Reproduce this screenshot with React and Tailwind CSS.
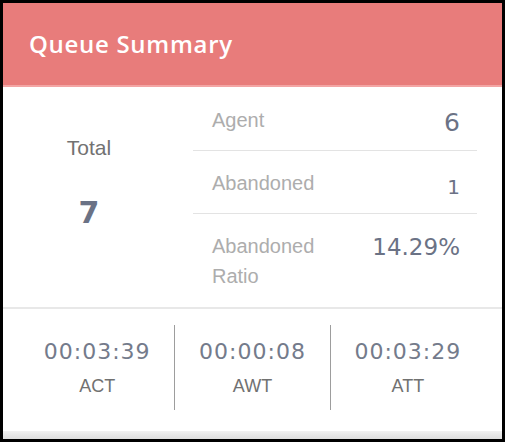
export default function App() {
  const times = [
    { value: '00:03:39', label: 'ACT' },
    { value: '00:00:08', label: 'AWT' },
    { value: '00:03:29', label: 'ATT' },
  ]
  const num = { fontFamily: '"DejaVu Sans", sans-serif' }

  return (
    <div className="w-[508px] h-[446px] bg-white">
      <div className="w-[505px] h-[442px] border-[3px] border-black flex flex-col bg-white" style={{ fontFamily: '"Liberation Sans", Arial, sans-serif' }}>
        <div className="h-[84px] shrink-0 bg-[#e87c7b] border-b-2 border-[#f3a5a4] flex items-center pl-[26px]">
          <h1 className="text-white text-[24px] font-semibold tracking-[0.7px] leading-none" style={{ fontFamily: '"Open Sans", sans-serif' }}>Queue Summary</h1>
        </div>

        <div className="flex h-[222px] shrink-0 border-b-2 border-[#e8e8e8]">
          <div className="w-[172px] flex flex-col items-center pt-[50px]">
            <div className="text-[21px] leading-[21px] text-[#727272]">Total</div>
            <div className="text-[30px] leading-[30px] font-bold text-[#6b7285] mt-[40px]" style={num}>7</div>
          </div>
          <div className="flex-1 pl-[18px] pr-[25px]">
            <div className="flex justify-between items-start h-[64px] border-b border-[#e3e3e3] pt-[23px] pl-[19px] pr-[17px]">
              <span className="text-[20px] leading-[20px] text-[#adadad]">Agent</span>
              <span className="text-[25px] leading-[25px] text-[#6b7285]" style={num}>6</span>
            </div>
            <div className="flex justify-between items-start h-[63px] border-b border-[#e3e3e3] pt-[22px] pl-[19px] pr-[17px]">
              <span className="text-[20px] leading-[20px] text-[#adadad]">Abandoned</span>
              <span className="text-[20px] leading-[20px] text-[#6b7285] mt-[4px]" style={num}>1</span>
            </div>
            <div className="flex justify-between items-start pt-[17px] pl-[19px] pr-[17px]">
              <span className="text-[20px] leading-[30px] text-[#adadad]">Abandoned<br />Ratio</span>
              <span className="text-[23px] leading-[23px] text-[#6b7285] mt-[5px]" style={num}>14.29%</span>
            </div>
          </div>
        </div>

        <div className="flex px-[17px] pt-[16px] h-[122px] shrink-0">
          {times.map((t, i) => (
            <div key={t.label} className={'flex-1 h-[85px] flex flex-col items-center pt-[16px] ' + (i > 0 ? 'border-l border-[#9d9d9d]' : '')}>
              <div className="text-[22px] leading-[21px] tracking-[1px] text-[#747b8b]" style={num}>{t.value}</div>
              <div className="text-[18px] leading-[18px] text-[#717171] mt-[15px]">{t.label}</div>
            </div>
          ))}
        </div>
        <div className="flex-1 bg-gradient-to-b from-[#f1f1f1] to-[#dedede]" />
      </div>
    </div>
  )
}
